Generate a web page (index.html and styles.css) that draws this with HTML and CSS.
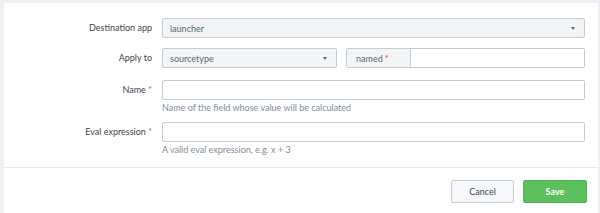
FILE: index.html
```html
<!DOCTYPE html>
<html>
<head>
<meta charset="utf-8">
<link rel="stylesheet" href="styles.css">
</head>
<body>
<div class="panel">
  <div class="form">
    <div class="row">
      <label class="label">Destination app</label>
      <div class="control">
        <div class="select wide"><span>launcher</span><span class="caret"></span></div>
      </div>
    </div>
    <div class="row apply">
      <label class="label">Apply to</label>
      <div class="control split">
        <div class="select half"><span>sourcetype</span><span class="caret"></span></div>
        <div class="named">
          <div class="addon">named <span class="req">*</span></div>
          <div class="namedinput"></div>
        </div>
      </div>
    </div>
    <div class="row">
      <label class="label">Name <span class="req">*</span></label>
      <div class="control">
        <div class="input"></div>
        <div class="help">Name of the field whose value will be calculated</div>
      </div>
    </div>
    <div class="row eval">
      <label class="label">Eval expression <span class="req">*</span></label>
      <div class="control">
        <div class="input"></div>
        <div class="help">A valid eval expression, e.g. x + 3</div>
      </div>
    </div>
  </div>
  <div class="footer">
    <button class="btn cancel">Cancel</button>
    <button class="btn save">Save</button>
  </div>
</div>
</body>
</html>
```

FILE: styles.css
```css
html, body {
  margin: 0;
  padding: 0;
  height: 100%;
}
body {
  background: #eef0f3;
  font-family: Lato, "Open Sans", sans-serif;
  font-size: 9px;
  color: #3c444d;
}
.panel {
  margin: 3px 2px 0 4px;
  background: #ffffff;
  height: 210px;
  box-sizing: border-box;
}
.form {
  padding: 15px 13px 11px 0;
  display: flex;
  flex-direction: column;
  gap: 10px;
  border-bottom: 1px solid #e6e9ec;
}
.row {
  display: grid;
  grid-template-columns: 148px 1fr;
  column-gap: 10px;
  align-items: start;
}
.apply {
  margin-bottom: 2px;
}
.eval {
  margin-top: -2px;
}
.label {
  text-align: right;
  line-height: 20px;
  color: #3c444d;
}
.req {
  color: #d6563c;
}
.select {
  height: 20px;
  box-sizing: border-box;
  background: #f2f4f5;
  border: 1px solid #c3cbd4;
  border-radius: 2px;
  display: flex;
  align-items: center;
  justify-content: space-between;
  padding: 0 9px 0 7px;
  color: #5c6773;
}
.caret {
  width: 0;
  height: 0;
  border-left: 2.5px solid transparent;
  border-right: 2.5px solid transparent;
  border-top: 3px solid #5c6773;
}
.split {
  display: flex;
  gap: 9px;
}
.half {
  width: 175px;
}
.named {
  flex: 1;
  display: flex;
  height: 20px;
  box-sizing: border-box;
  border: 1px solid #c3cbd4;
  border-radius: 2px;
}
.addon {
  width: 64px;
  background: #f2f4f5;
  border-right: 1px solid #c3cbd4;
  color: #5c6773;
  display: flex;
  align-items: center;
  padding-left: 9px;
  box-sizing: border-box;
  gap: 2px;
}
.namedinput {
  flex: 1;
  background: #fff;
}
.input {
  height: 20px;
  box-sizing: border-box;
  border: 1px solid #c3cbd4;
  border-radius: 2px;
  background: #fff;
}
.help {
  color: #818d99;
  margin-top: 2px;
  line-height: 12px;
}
.footer {
  display: flex;
  justify-content: flex-end;
  gap: 9px;
  padding: 12px 11px 0 0;
}
.btn {
  height: 23px;
  font-family: Lato, "Open Sans", sans-serif;
  font-size: 9px;
  border-radius: 2px;
  box-sizing: border-box;
}
.cancel {
  width: 63px;
  background: #f7f8fa;
  border: 1px solid #c3cbd4;
  color: #3c444d;
}
.save {
  width: 64px;
  background: #5cc05c;
  border: 1px solid #4fb34f;
  color: #fff;
  font-weight: bold;
}
```
